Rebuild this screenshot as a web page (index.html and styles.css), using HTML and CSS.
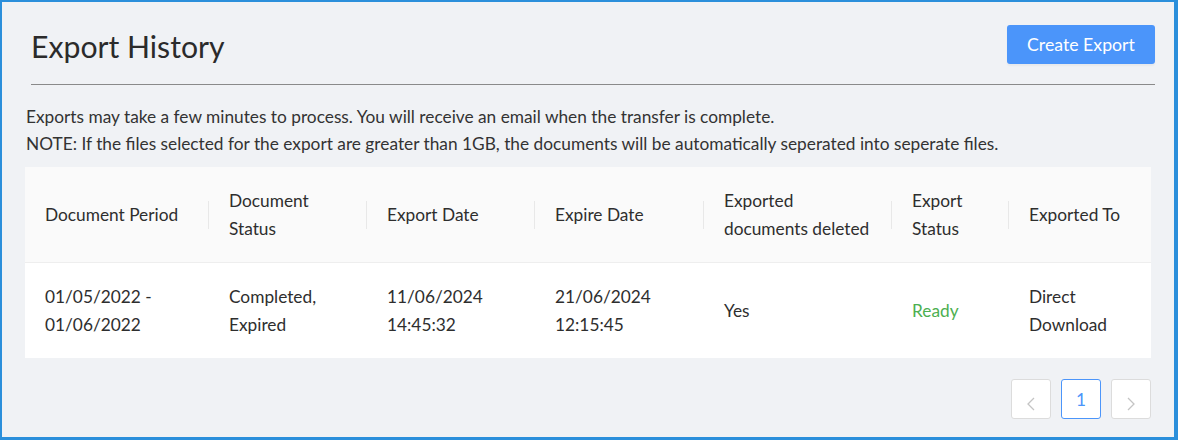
FILE: index.html
```html
<!DOCTYPE html>
<html lang="en">
<head>
<meta charset="utf-8">
<title>Export History</title>
<link rel="stylesheet" href="styles.css">
</head>
<body>
<div class="frame">
  <div class="header">
    <h1 class="title">Export History</h1>
    <button class="btn-primary">Create Export</button>
  </div>
  <p class="note">Exports may take a few minutes to process. You will receive an email when the transfer is complete.<br>NOTE: If the files selected for the export are greater than 1GB, the documents will be automatically seperated into seperate files.</p>
  <table class="table">
    <colgroup>
      <col class="c1"><col class="c2"><col class="c3"><col class="c4"><col class="c5"><col class="c6"><col class="c7">
    </colgroup>
    <thead>
      <tr>
        <th>Document Period</th>
        <th>Document Status</th>
        <th>Export Date</th>
        <th>Expire Date</th>
        <th>Exported documents deleted</th>
        <th>Export Status</th>
        <th>Exported To</th>
      </tr>
    </thead>
    <tbody>
      <tr>
        <td>01/05/2022 - 01/06/2022</td>
        <td>Completed, Expired</td>
        <td>11/06/2024 14:45:32</td>
        <td>21/06/2024 12:15:45</td>
        <td>Yes</td>
        <td class="ready">Ready</td>
        <td>Direct Download</td>
      </tr>
    </tbody>
  </table>
  <div class="pagination">
    <span class="page disabled"><svg width="10" height="14" viewBox="0 0 10 14"><path d="M8 1 L2 7 L8 13" fill="none" stroke="#c4c4c4" stroke-width="1.3"/></svg></span>
    <span class="page active">1</span>
    <span class="page disabled"><svg width="10" height="14" viewBox="0 0 10 14"><path d="M2 1 L8 7 L2 13" fill="none" stroke="#c4c4c4" stroke-width="1.3"/></svg></span>
  </div>
</div>
</body>
</html>
```
FILE: styles.css
```css
html, body {
  margin: 0;
  padding: 0;
}
body {
  font-family: Lato, "Open Sans", sans-serif;
  color: #333;
}
.frame {
  box-sizing: border-box;
  width: 1178px;
  height: 440px;
  border: 2px solid #2b8fdb;
  border-right-width: 4px;
  border-bottom-width: 3px;
  background: #f0f2f5;
  padding: 23px 23px 0 23px;
  overflow: hidden;
}
.header {
  display: flex;
  justify-content: space-between;
  align-items: flex-start;
  margin: 0 -4px 0 6px;
  padding-bottom: 20px;
  border-bottom: 1px solid #8a8a8a;
}
.title {
  margin: 2px 0 -2px;
  font-size: 30.2px;
  font-weight: 400;
  color: #2b2b2b;
  line-height: 39px;
}
.btn-primary {
  width: 148px;
  height: 39px;
  border: none;
  border-radius: 3px;
  background: #4b95fa;
  color: #fff;
  font-family: Lato, sans-serif;
  font-size: 17.7px;
  box-shadow: 0 2px 2px rgba(0, 0, 0, 0.04);
  padding: 0;
}
.note {
  margin: 18px 0 10px;
  padding-left: 1px;
  font-size: 17.3px;
  line-height: 27px;
  color: #333;
}
.table {
  width: 1126px;
  table-layout: fixed;
  border-collapse: collapse;
  font-size: 17.3px;
  line-height: 28px;
}
.c1 { width: 184px; }
.c2 { width: 158px; }
.c3 { width: 168px; }
.c4 { width: 169px; }
.c5 { width: 188px; }
.c6 { width: 117px; }
.c7 { width: 142px; }
.table th {
  position: relative;
  height: 95px;
  padding: 0 12px 0 20px;
  background: #fafafa;
  font-weight: 400;
  color: #2e2e2e;
  text-align: left;
  border-bottom: 1px solid #eeeeee;
}
.table th:not(:last-child)::before {
  content: "";
  position: absolute;
  right: 0;
  top: 50%;
  width: 1px;
  height: 28px;
  transform: translateY(-50%);
  background: #e8e8e8;
}
.table td {
  height: 95px;
  padding: 0 12px 0 20px;
  background: #fff;
  color: #2e2e2e;
}
.table td.ready {
  color: #4caf50;
}
.pagination {
  display: flex;
  justify-content: flex-end;
  gap: 10px;
  margin-top: 21px;
}
.page {
  box-sizing: border-box;
  width: 40px;
  height: 40px;
  display: flex;
  align-items: center;
  justify-content: center;
  border: 1px solid #dcdcdc;
  border-radius: 3px;
  background: #fff;
  font-size: 17.3px;
}
.page.disabled svg {
  margin-top: 9px;
}
.page.active {
  border-color: #4b95fa;
  color: #4b95fa;
}
```
